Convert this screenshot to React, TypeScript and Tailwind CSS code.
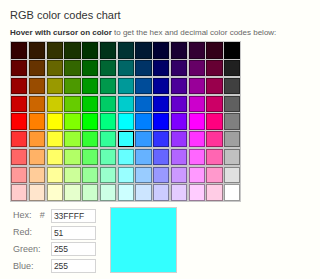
import React from "react";

const rows: string[][] = [
  ["#330000", "#331900", "#333300", "#193300", "#003300", "#003319", "#003333", "#001933", "#000033", "#190033", "#330033", "#330019", "#000000"],
  ["#660000", "#663300", "#666600", "#336600", "#006600", "#006633", "#006666", "#003366", "#000066", "#330066", "#660066", "#660033", "#202020"],
  ["#990000", "#994C00", "#999900", "#4C9900", "#009900", "#00994C", "#009999", "#004C99", "#000099", "#4C0099", "#990099", "#99004C", "#404040"],
  ["#CC0000", "#CC6600", "#CCCC00", "#66CC00", "#00CC00", "#00CC66", "#00CCCC", "#0066CC", "#0000CC", "#6600CC", "#CC00CC", "#CC0066", "#606060"],
  ["#FF0000", "#FF8000", "#FFFF00", "#80FF00", "#00FF00", "#00FF80", "#00FFFF", "#0080FF", "#0000FF", "#7F00FF", "#FF00FF", "#FF007F", "#808080"],
  ["#FF3333", "#FF9933", "#FFFF33", "#99FF33", "#33FF33", "#33FF99", "#33FFFF", "#3399FF", "#3333FF", "#9933FF", "#FF33FF", "#FF3399", "#A0A0A0"],
  ["#FF6666", "#FFB266", "#FFFF66", "#B2FF66", "#66FF66", "#66FFB2", "#66FFFF", "#66B2FF", "#6666FF", "#B266FF", "#FF66FF", "#FF66B2", "#C0C0C0"],
  ["#FF9999", "#FFCC99", "#FFFF99", "#CCFF99", "#99FF99", "#99FFCC", "#99FFFF", "#99CCFF", "#9999FF", "#CC99FF", "#FF99FF", "#FF99CC", "#E0E0E0"],
  ["#FFCCCC", "#FFE5CC", "#FFFFCC", "#E5FFCC", "#CCFFCC", "#CCFFE5", "#CCFFFF", "#CCE5FF", "#CCCCFF", "#E5CCFF", "#FFCCFF", "#FFCCE5", "#FFFFFF"],
];

const selected = "#33FFFF";

const fields = [
  { label: "Hex:", hash: true, value: "33FFFF" },
  { label: "Red:", hash: false, value: "51" },
  { label: "Green:", hash: false, value: "255" },
  { label: "Blue:", hash: false, value: "255" },
];

const App = () => {
  return (
    <div className="w-[320px] h-[279px] overflow-hidden bg-[#fffffa] pt-[8px] pl-[10px] font-['Liberation_Sans',Arial,sans-serif]">
      <h1 className="text-[11px] leading-[14px] text-[#333]">RGB color codes chart</h1>
      <p className="mt-[6.2px] text-[8px] leading-[10px] text-[#666] whitespace-nowrap">
        <b className="text-[#333]">Hover with cursor on color</b> to get the hex and decimal color codes below:
      </p>

      <div className="mt-[3.1px] w-fit bg-[#c8c8c8] p-px grid grid-cols-[repeat(13,16.25px)] auto-rows-[16.25px] gap-[1.5px]">
        {rows.flat().map((c, i) => (
          <div
            key={i}
            className={c === selected ? "border border-black" : "border border-black/40"}
            style={{ backgroundColor: c }}
          />
        ))}
      </div>

      <div className="mt-[5.75px] ml-[3px] flex items-end">
        <div className="flex flex-col gap-[2.8px]">
          {fields.map((f) => (
            <div key={f.label} className="flex items-center h-[14px] text-[9px] text-[#777]">
              <span className="w-[26.7px]">{f.label}</span>
              <span className="w-[11.7px]">{f.hash ? "#" : ""}</span>
              <input
                readOnly
                value={f.value}
                className="w-[45px] h-[14px] border border-[#d4d4d4] bg-white px-[1.5px] text-[8.5px] text-[#333] outline-none"
              />
            </div>
          ))}
        </div>
        <div className="ml-[14px] w-[67px] h-[66px] border border-[#cfcfcf] bg-[#33FFFF]" />
      </div>
    </div>
  );
};

export default App;
